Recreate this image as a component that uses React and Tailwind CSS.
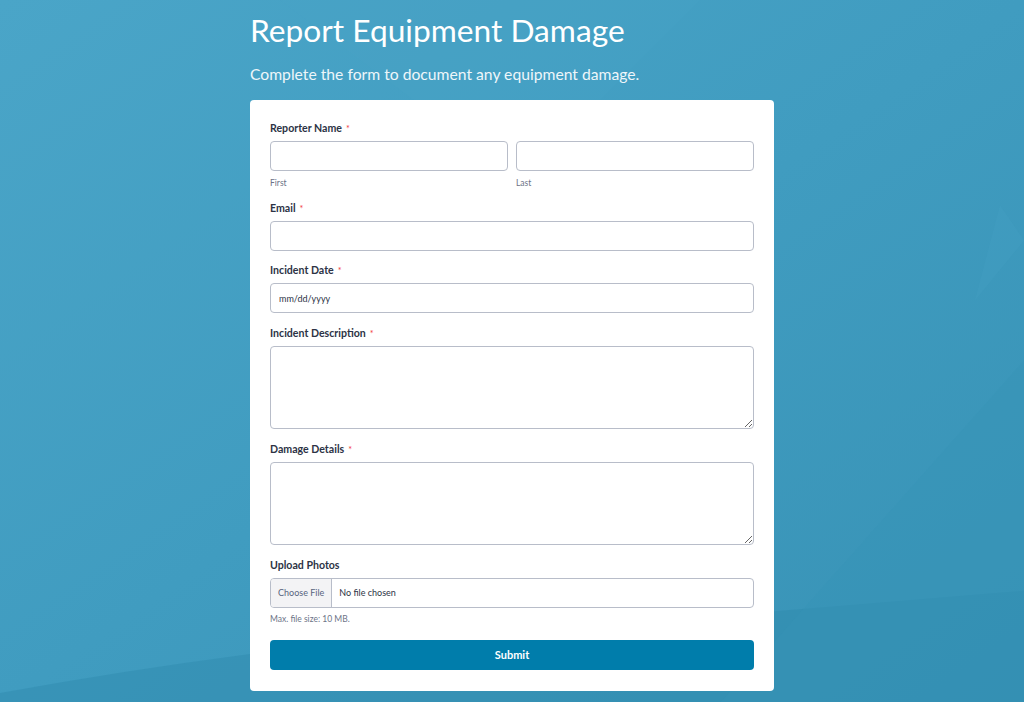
import React from "react";

function Label({ children, required }) {
    return (
        <label className="flex h-[14px] items-center text-[10.6px] leading-[14px] font-bold text-[#2c3345] mb-[6px]">
            {children}
            {required && <span className="text-[#f23a3c] ml-[4px] text-[9px] leading-none font-normal">*</span>}
        </label>
    );
}

const inputCls =
    "block w-full h-[30px] rounded-[4px] border border-[#b8bdc9] bg-white px-2 text-[9px] text-[#2c3345] outline-none";

const areaCls =
    "block w-full h-[83px] rounded-[4px] border border-[#b8bdc9] bg-white px-2 py-1 text-[9px] text-[#2c3345] outline-none";

export default function App() {
    return (
        <div
            className="relative min-h-[702px] w-full overflow-hidden bg-gradient-to-br from-[#4aa5c8] via-[#409cc0] to-[#3792b5]"
            style={{ fontFamily: "Lato, 'Noto Sans', sans-serif" }}
        >
            {/* background shapes */}
            <svg
                className="absolute inset-0 w-full h-full"
                viewBox="0 0 1024 702"
                preserveAspectRatio="none"
            >
                <path d="M0 702 L0 692 Q 120 670 250 653 L1024 590 L1024 702 Z" fill="#2f89ae" opacity="0.45" />
                <path d="M720 702 L1024 360 L1024 702 Z" fill="#3894b7" opacity="0.4" />
                <path d="M1000 205 L975 300 L1024 240 Z" fill="#49a3c6" opacity="0.2" />
                <path d="M280 0 L700 0 L520 180 Z" fill="#4ba6c9" opacity="0.2" />
            </svg>

            <div className="relative mx-auto w-[524px] pt-3 pb-3">
                <h1 className="text-[31.7px] leading-[36px] font-normal text-white">
                    Report Equipment Damage
                </h1>
                <p className="mt-[14px] text-[15.7px] leading-[24px] text-[#eef6fa]">
                    Complete the form to document any equipment damage.
                </p>

                <form className="mt-[14px] rounded-[4px] bg-white px-5 pt-[21px] pb-[21px]">
                    <Label required>Reporter Name</Label>
                    <div className="grid grid-cols-2 gap-2">
                        <div>
                            <input className={inputCls} />
                            <div className="mt-[6px] text-[8.5px] leading-[12px] text-[#6c7387]">First</div>
                        </div>
                        <div>
                            <input className={inputCls} />
                            <div className="mt-[6px] text-[8.5px] leading-[12px] text-[#6c7387]">Last</div>
                        </div>
                    </div>

                    <div className="mt-[12px]">
                        <Label required>Email</Label>
                        <input className={inputCls} />
                    </div>

                    <div className="mt-[12px]">
                        <Label required>Incident Date</Label>
                        <input
                            className={inputCls + " placeholder:text-[#2c3345]"}
                            placeholder="mm/dd/yyyy"
                        />
                    </div>

                    <div className="mt-[13px]">
                        <Label required>Incident Description</Label>
                        <textarea className={areaCls} />
                    </div>

                    <div className="mt-[13px]">
                        <Label required>Damage Details</Label>
                        <textarea className={areaCls} />
                    </div>

                    <div className="mt-[13px]">
                        <Label>Upload Photos</Label>
                        <div className="flex h-[30px] w-full overflow-hidden rounded-[4px] border border-[#b8bdc9] bg-white text-[9px]">
                            <span className="flex items-center border-r border-[#b8bdc9] bg-[#f3f3f5] px-[7px] text-[#57647e]">
                                Choose File
                            </span>
                            <span className="flex items-center px-[7px] text-[#2c3345]">No file chosen</span>
                        </div>
                        <div className="mt-[5px] text-[8.5px] leading-[12px] text-[#6c7387]">
                            Max. file size: 10 MB.
                        </div>
                    </div>

                    <button
                        type="button"
                        className="mt-[15px] block h-[30px] w-full rounded-[4px] bg-[#007dab] text-[11px] font-bold text-white"
                    >
                        Submit
                    </button>
                </form>
            </div>
        </div>
    );
}
